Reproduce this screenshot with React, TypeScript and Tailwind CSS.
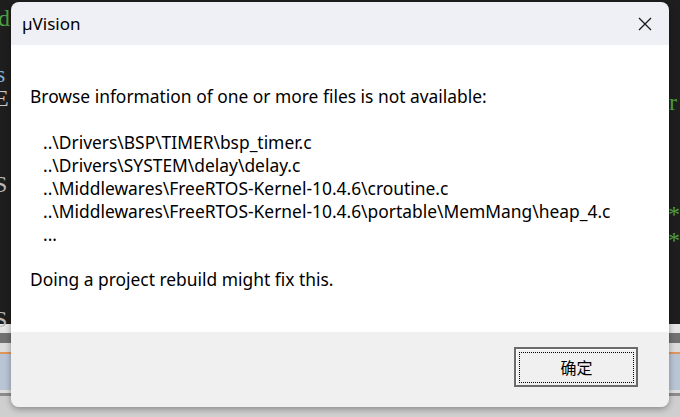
import React from "react";

// 背景のエディタ（ダイアログの後ろに少しだけ見える部分）
function EditorBackdrop() {
  return (
    <div className="flex h-full w-full flex-col">
      <div className="relative h-[324px] bg-[#1e1e1e] font-['Liberation_Serif',serif] text-[24px] leading-none">
        <span className="absolute left-[-2px] top-[6px] text-[#4ea342]">d</span>
        <span className="absolute left-[-4px] top-[62px] text-[#7fb0d8]">s</span>
        <span className="absolute left-[-6px] top-[86px] text-[#c8c8c8]">E</span>
        <span className="absolute left-[-6px] top-[172px] text-[#b8b8b8]">S</span>
        <span className="absolute left-[-6px] top-[307px] text-[#b8b8b8]">S</span>
        <span className="absolute left-[669px] top-[90px] text-[#4ea342]">r</span>
        <span className="absolute left-[668px] top-[202px] text-[#4ea342]">*</span>
        <span className="absolute left-[668px] top-[228px] text-[#4ea342]">*</span>
      </div>
      <div className="h-[9px] bg-[#e4e4e4]" />
      <div className="h-[10px] bg-[#717171]" />
      <div className="h-[9px] bg-[#dcdcdc]" />
      <div className="h-[2px] bg-[#e0955b]" />
      <div className="h-[36px] bg-[#b9c5d5]" />
      <div className="h-[3px] bg-[#dedede]" />
      <div className="h-[3px] bg-[#8c8c8c]" />
      <div className="flex-1 bg-[#cfcfcf]" />
    </div>
  );
}

function CloseIcon() {
  return (
    <svg width="16" height="16" viewBox="0 0 16 16" fill="none">
      <path d="M2 2L14 14M14 2L2 14" stroke="#1a1a1a" strokeWidth="1.3" />
    </svg>
  );
}

const files = [
  "..\\Drivers\\BSP\\TIMER\\bsp_timer.c",
  "..\\Drivers\\SYSTEM\\delay\\delay.c",
  "..\\Middlewares\\FreeRTOS-Kernel-10.4.6\\croutine.c",
  "..\\Middlewares\\FreeRTOS-Kernel-10.4.6\\portable\\MemMang\\heap_4.c",
  "...",
];

export default function App() {
  return (
    <div className="relative h-[417px] w-[680px] overflow-hidden font-['Noto_Sans','Noto_Sans_CJK_SC',sans-serif] text-black">
      <EditorBackdrop />

      {/* ダイアログ本体 */}
      <div className="absolute left-[11px] top-[2px] flex h-[405px] w-[658px] flex-col overflow-hidden rounded-[8px] shadow-[0_2px_6px_rgba(0,0,0,0.35)]">
        <div className="flex h-[43px] items-center justify-between bg-[#eff0f6] pl-[11px] pr-[16px]">
          <span className="text-[17px]">µVision</span>
          <CloseIcon />
        </div>

        <div className="flex h-[287px] flex-col bg-white pl-[19px] pt-[40px] text-[17.4px] leading-[23px]">
          <p>Browse information of one or more files is not available:</p>
          <ul className="mt-[23px] pl-[13px]">
            {files.map((f) => (
              <li key={f}>{f}</li>
            ))}
          </ul>
          <p className="mt-[22px]">Doing a project rebuild might fix this.</p>
        </div>

        <div className="flex flex-1 items-start justify-end bg-[#f0f0f0] pr-[31px] pt-[15px]">
          <button className="h-[40px] w-[124px] border-2 border-[#6b6b6b] bg-[#f0f0f0] p-0">
            <div className="flex h-full w-full border-l border-t border-white p-[2px]">
              <div className="flex flex-1 items-center justify-center border border-dotted border-black text-[16px]">
                确定
              </div>
            </div>
          </button>
        </div>
      </div>
    </div>
  );
}
